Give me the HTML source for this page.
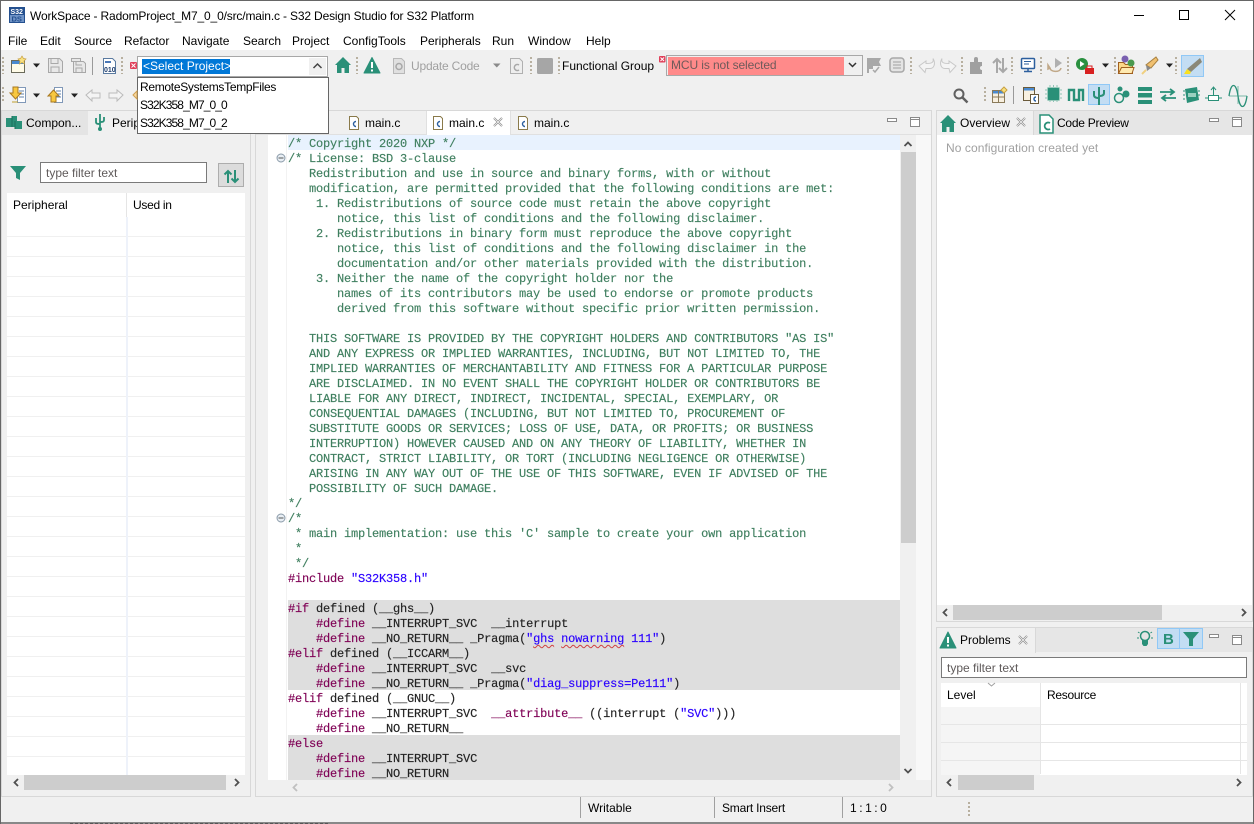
<!DOCTYPE html>
<html><head><meta charset="utf-8"><title>S32 Design Studio</title>
<style>
html,body{margin:0;padding:0;width:1254px;height:824px;overflow:hidden;background:#f0f0f0}
body{position:relative;font:12px/16px "Liberation Sans",sans-serif;color:#000}
.a{position:absolute;box-sizing:border-box}
.t{position:absolute;white-space:pre;line-height:16px;color:#000}
#code{position:absolute;left:288px;top:137px;margin:0;font:12px/15px "Liberation Mono",monospace;letter-spacing:-.2px;color:#3f7f5f;white-space:pre;-webkit-text-stroke:.15px}
#code i{font-style:normal;color:#7f0055}
#code b{font-weight:normal;color:#2a00ff}
#code u{font-style:normal;text-decoration:none;color:#222}
#code s{text-decoration:underline wavy #d04040 1px;text-underline-offset:2px;color:#2a00ff}
svg{position:absolute;left:0;top:0}
</style></head><body>
<div class="a" style="left:0;top:0;width:1254px;height:50px;background:#fff"></div>
<div class="t" style="left:30px;top:8px;letter-spacing:-.16px">WorkSpace - RadomProject_M7_0_0/src/main.c - S32 Design Studio for S32 Platform</div>
<div class="t" style="left:8px;top:33px">File</div>
<div class="t" style="left:40px;top:33px">Edit</div>
<div class="t" style="left:74px;top:33px">Source</div>
<div class="t" style="left:124px;top:33px">Refactor</div>
<div class="t" style="left:182px;top:33px">Navigate</div>
<div class="t" style="left:243px;top:33px">Search</div>
<div class="t" style="left:292px;top:33px">Project</div>
<div class="t" style="left:343px;top:33px">ConfigTools</div>
<div class="t" style="left:420px;top:33px">Peripherals</div>
<div class="t" style="left:492px;top:33px">Run</div>
<div class="t" style="left:528px;top:33px">Window</div>
<div class="t" style="left:586px;top:33px">Help</div>

<!-- left panel -->
<div class="a" style="left:1px;top:110px;width:250px;height:687px;background:#f0f0f0;border:1px solid #d8d8d8"></div>
<div class="a" style="left:2px;top:111px;width:86px;height:24px;background:#e4e4e4"></div>
<div class="t" style="left:26px;top:115px">Compon...</div>
<div class="t" style="left:112px;top:115px">Peripherals</div>
<div class="a" style="left:40px;top:162px;width:167px;height:21px;background:#fff;border:1px solid #7a7a7a"></div>
<div class="t" style="left:46px;top:165px;color:#5f5a5a">type filter text</div>
<div class="a" style="left:218px;top:163px;width:26px;height:24px;background:#dcdcdc;border:1px solid #adadad"></div>
<div class="a" style="left:7px;top:193px;width:238px;height:582px;background:#fff"></div>
<div class="a" style="left:7px;top:217px;width:238px;height:558px;background:repeating-linear-gradient(#fff 0 19px,#f0f0f0 19px 20px)"></div>
<div class="a" style="left:126px;top:193px;width:1px;height:24px;background:#e5e5e5"></div>
<div class="a" style="left:126px;top:217px;width:2px;height:558px;background:#eef2fa"></div>
<div class="t" style="left:13px;top:197px">Peripheral</div>
<div class="t" style="left:133px;top:197px;letter-spacing:-.3px">Used in</div>
<div class="a" style="left:24px;top:775px;width:202px;height:15px;background:#cdcdcd"></div>

<!-- editor -->
<div class="a" style="left:255px;top:110px;width:677px;height:687px;background:#f0f0f0;border:1px solid #d8d8d8"></div>
<div class="a" style="left:256px;top:111px;width:675px;height:23px;background:#f0f0f0"></div>
<div class="a" style="left:256px;top:134px;width:675px;height:1px;background:#e0e0e0"></div>
<div class="a" style="left:426px;top:111px;width:85px;height:24px;background:#fff;border-left:1px solid #e0e0e0;border-right:1px solid #e0e0e0"></div>
<div class="t" style="left:365px;top:115px">main.c</div>
<div class="t" style="left:449px;top:115px">main.c</div>
<div class="t" style="left:534px;top:115px">main.c</div>
<div class="a" style="left:268px;top:135px;width:632px;height:645px;background:#fff"></div>
<div class="a" style="left:286px;top:135px;width:1px;height:645px;background:#f2f2f2"></div>
<div class="a" style="left:288px;top:135px;width:612px;height:15px;background:#e8f2fe"></div>
<div class="a" style="left:288px;top:600px;width:612px;height:90px;background:#dedede"></div>
<div class="a" style="left:288px;top:735px;width:612px;height:45px;background:#dedede"></div>
<div class="a" style="left:900px;top:135px;width:16px;height:645px;background:#f0f0f0"></div>
<div class="a" style="left:916px;top:135px;width:15px;height:661px;background:#f8f8f8"></div>
<div class="a" style="left:901px;top:152px;width:15px;height:391px;background:#cdcdcd"></div>
<pre id="code">/* Copyright 2020 NXP */
/* License: BSD 3-clause
   Redistribution and use in source and binary forms, with or without
   modification, are permitted provided that the following conditions are met:
    1. Redistributions of source code must retain the above copyright
       notice, this list of conditions and the following disclaimer.
    2. Redistributions in binary form must reproduce the above copyright
       notice, this list of conditions and the following disclaimer in the
       documentation and/or other materials provided with the distribution.
    3. Neither the name of the copyright holder nor the
       names of its contributors may be used to endorse or promote products
       derived from this software without specific prior written permission.

   THIS SOFTWARE IS PROVIDED BY THE COPYRIGHT HOLDERS AND CONTRIBUTORS "AS IS"
   AND ANY EXPRESS OR IMPLIED WARRANTIES, INCLUDING, BUT NOT LIMITED TO, THE
   IMPLIED WARRANTIES OF MERCHANTABILITY AND FITNESS FOR A PARTICULAR PURPOSE
   ARE DISCLAIMED. IN NO EVENT SHALL THE COPYRIGHT HOLDER OR CONTRIBUTORS BE
   LIABLE FOR ANY DIRECT, INDIRECT, INCIDENTAL, SPECIAL, EXEMPLARY, OR
   CONSEQUENTIAL DAMAGES (INCLUDING, BUT NOT LIMITED TO, PROCUREMENT OF
   SUBSTITUTE GOODS OR SERVICES; LOSS OF USE, DATA, OR PROFITS; OR BUSINESS
   INTERRUPTION) HOWEVER CAUSED AND ON ANY THEORY OF LIABILITY, WHETHER IN
   CONTRACT, STRICT LIABILITY, OR TORT (INCLUDING NEGLIGENCE OR OTHERWISE)
   ARISING IN ANY WAY OUT OF THE USE OF THIS SOFTWARE, EVEN IF ADVISED OF THE
   POSSIBILITY OF SUCH DAMAGE.
*/
/*
 * main implementation: use this 'C' sample to create your own application
 *
 */
<i>#include</i> <b>"S32K358.h"</b>

<i>#if</i> <u>defined (__ghs__)</u>
    <i>#define</i> <u>__INTERRUPT_SVC  __interrupt</u>
    <i>#define</i> <u>__NO_RETURN__ _Pragma(</u><b>"<s>ghs</s> <s>nowarning</s> 111"</b><u>)</u>
<i>#elif</i> <u>defined (__ICCARM__)</u>
    <i>#define</i> <u>__INTERRUPT_SVC  __svc</u>
    <i>#define</i> <u>__NO_RETURN__ _Pragma(</u><b>"diag_suppress=Pe111"</b><u>)</u>
<i>#elif</i> <u>defined (__GNUC__)</u>
    <i>#define</i> <u>__INTERRUPT_SVC  </u><i>__attribute__</i> <u>((interrupt (</u><b>"SVC"</b><u>)))</u>
    <i>#define</i> <u>__NO_RETURN__</u>
<i>#else</i>
    <i>#define</i> <u>__INTERRUPT_SVC</u>
    <i>#define</i> <u>__NO_RETURN</u></pre>
<div class="a" style="left:256px;top:780px;width:675px;height:16px;background:#f0f0f0"></div>

<!-- right top panel -->
<div class="a" style="left:936px;top:110px;width:317px;height:512px;background:#fff;border:1px solid #d8d8d8"></div>
<div class="a" style="left:937px;top:111px;width:315px;height:24px;background:#e6e6e6"></div>
<div class="a" style="left:937px;top:111px;width:97px;height:24px;background:#f0f0f0;border-right:1px solid #d8d8d8"></div>
<div class="t" style="left:960px;top:115px">Overview</div>
<div class="t" style="left:1057px;top:115px;letter-spacing:-.25px">Code Preview</div>
<div class="t" style="left:946px;top:140px;color:#a0a0a0;letter-spacing:.08px">No configuration created yet</div>
<div class="a" style="left:937px;top:605px;width:315px;height:16px;background:#f0f0f0"></div>
<div class="a" style="left:953px;top:605px;width:209px;height:15px;background:#cdcdcd"></div>

<!-- problems panel -->
<div class="a" style="left:936px;top:627px;width:317px;height:170px;background:#f0f0f0;border:1px solid #d8d8d8"></div>
<div class="a" style="left:937px;top:628px;width:315px;height:24px;background:#e6e6e6"></div>
<div class="a" style="left:937px;top:628px;width:99px;height:25px;background:#f0f0f0;border-right:1px solid #d8d8d8"></div>
<div class="t" style="left:960px;top:632px">Problems</div>
<div class="a" style="left:1157px;top:628px;width:46px;height:21px;background:#c3ddf3;border:1px solid #90c8f6"></div>
<div class="a" style="left:1179px;top:628px;width:1px;height:21px;background:#90c8f6"></div>
<div class="a" style="left:941px;top:657px;width:306px;height:21px;background:#fff;border:1px solid #7a7a7a"></div>
<div class="t" style="left:947px;top:660px;color:#5f5a5a">type filter text</div>
<div class="a" style="left:941px;top:683px;width:306px;height:92px;background:#fff"></div>
<div class="a" style="left:941px;top:707px;width:99px;height:68px;background:#f5f5f5"></div>
<div class="a" style="left:941px;top:707px;width:306px;height:67px;background:repeating-linear-gradient(transparent 0 17px,#e6e6e6 17px 18px)"></div>
<div class="a" style="left:1040px;top:683px;width:1px;height:91px;background:#e5e5e5"></div>
<div class="a" style="left:1240px;top:683px;width:1px;height:91px;background:#e5e5e5"></div>
<div class="t" style="left:947px;top:687px">Level</div>
<div class="t" style="left:1047px;top:687px;letter-spacing:-.3px">Resource</div>
<div class="a" style="left:958px;top:775px;width:76px;height:15px;background:#cdcdcd"></div>

<!-- status bar -->
<div class="t" style="left:588px;top:800px">Writable</div>
<div class="t" style="left:722px;top:800px;letter-spacing:-.2px">Smart Insert</div>
<div class="t" style="left:850px;top:800px;letter-spacing:-.4px">1 : 1 : 0</div>
<div class="a" style="left:580px;top:797px;width:1px;height:21px;background:#a0a0a0"></div>
<div class="a" style="left:714px;top:797px;width:1px;height:21px;background:#a0a0a0"></div>
<div class="a" style="left:842px;top:797px;width:1px;height:21px;background:#a0a0a0"></div>

<!-- toolbar widgets -->
<div class="a" style="left:137px;top:56px;width:191px;height:21px;background:#fff;border:1px solid #a8a8a8"></div>
<div class="a" style="left:142px;top:59px;width:88px;height:15px;background:#0078d7"></div>
<div class="t" style="left:143px;top:58px;color:#fff">&lt;Select Project&gt;</div>
<div class="a" style="left:309px;top:58px;width:17px;height:17px;background:#f0f0f0"></div>
<div class="a" style="left:137px;top:77px;width:192px;height:57px;background:#fff;border:1px solid #666"></div>
<div class="t" style="left:140px;top:79px;letter-spacing:-.3px">RemoteSystemsTempFiles</div>
<div class="t" style="left:140px;top:97px;letter-spacing:-.9px">S32K358_M7_0_0</div>
<div class="t" style="left:140px;top:115px;letter-spacing:-.9px">S32K358_M7_0_2</div>
<div class="t" style="left:411px;top:58px;color:#a0a0a0;letter-spacing:-.2px">Update Code</div>
<div class="t" style="left:562px;top:58px">Functional Group</div>
<div class="a" style="left:666px;top:55px;width:197px;height:21px;background:#f0f0f0;border:1px solid #a8a8a8"></div>
<div class="a" style="left:668px;top:57px;width:176px;height:18px;background:#ff8a8a"></div>
<div class="t" style="left:671px;top:57px;color:#6e5a5a;letter-spacing:-.1px">MCU is not selected</div>
<div class="a" style="left:1181px;top:55px;width:23px;height:22px;background:#c3ddf3;border:1px solid #90c8f6"></div>
<div class="a" style="left:1088px;top:84px;width:22px;height:21px;background:#c3ddf3;border:1px solid #90c8f6"></div>

<svg width="1254" height="824" viewBox="0 0 1254 824" fill="none">
<!-- window frame -->
<path d="M.5 824V.5H1253.5V824" stroke="#666"/>
<path d="M0 823H1254" stroke="#666" stroke-width="1.5"/>
<path d="M70 823.5H330" stroke="#555" stroke-dasharray="3 2"/>
<!-- title icon -->
<rect x="9" y="7" width="16" height="16" fill="#24508f"/>
<rect x="10" y="15" width="14" height="7" fill="#6f93c6"/>
<text x="10.500" y="14" font-family="Liberation Sans" font-size="7" font-weight="bold" fill="#fff">S32</text>
<text x="11.500" y="21.500" font-family="Liberation Sans" font-size="7.500" font-weight="bold" fill="#24508f">DS</text>
<!-- window buttons -->
<path d="M1134 15.5H1144" stroke="#000"/>
<rect x="1179.5" y="10.5" width="9" height="9" stroke="#000"/>
<path d="M1225 10L1235 20M1235 10L1225 20" stroke="#000"/>
<!-- grips -->
<path d="M3 57V74M122 57V74M357 57V74M531 57V74M559 57V74M911 57V74M962 57V74M1012 57V74M1041 57V74M1068 57V74M1115 57V74M1176 57V74M3 87V103M985 87V103M969 802V818" stroke="#b8b0a0" stroke-width="2" stroke-dasharray="2 2"/>
<path d="M92.5 57V75M1013.5 86V104" stroke="#9a9a9a"/>
<!-- new wizard -->
<rect x="11.5" y="60.5" width="13" height="12" fill="#fffbe8" stroke="#6a6a5a"/><rect x="12" y="61" width="12" height="3" fill="#4a8ad0"/>
<path d="M22 56l1.5 2.5 2.5 .5-2 2 .5 3-2.500-1.500-2.500 1.500 .5-3-2-2 2.500-.5z" fill="#f8e080" stroke="#c8a040" stroke-width=".7"/>
<path d="M33 63.500h7l-3.500 4zM71 93.500h7l-3.500 4zM33 93.500h7l-3.500 4zM1102 63.500h7l-3.500 4zM1166 63.500h7l-3.500 4z" fill="#222"/>
<!-- save -->
<path d="M48.500 58.500h11l3 3v11h-14z" fill="#e8e8e8" stroke="#a8a8a8"/><path d="M51 59v4.500h7V59M51 72v-5h8v5" stroke="#a8a8a8"/>
<path d="M71.500 58.500h9v3h-9zM73.500 61.500h10l2 2v9h-12z" fill="#e8e8e8" stroke="#a8a8a8"/><path d="M76 62v3h6M76 72v-4h6v4" stroke="#a8a8a8"/>
<!-- 010 -->
<path d="M103.500 58.500h9l3 3v12h-12z" fill="#fff" stroke="#5a7aa0"/><rect x="105" y="61" width="6" height="2" fill="#4a78b8"/><text x="104" y="72" font-family="Liberation Sans" font-size="7" font-weight="bold" fill="#204070">010</text>
<!-- red error marks -->
<rect x="130" y="62" width="7" height="7" rx="1" fill="#e0405a"/><path d="M131.500 63.500l4 4m0-4l-4 4" stroke="#fff"/>
<rect x="659" y="56" width="6.500" height="6.500" rx="1" fill="#e0405a"/><path d="M660.500 57.500l3.500 3.500m0-3.500l-3.500 3.500" stroke="#fff"/>
<!-- combo chevrons -->
<path d="M313.500 68l4-4 4 4" stroke="#444" stroke-width="1.500"/>
<path d="M849 63l3.500 3.500 3.500-3.500" stroke="#333" stroke-width="1.500"/>
<!-- home and warning -->
<path d="M343 57l-8 8h2v8h4.500v-5h3v5H349v-8h2z" fill="#2a9078"/>
<path d="M372 57.500l-8 15.500h16z" fill="#2a9078" stroke="#2a9078" stroke-linejoin="round"/><path d="M372 62v6M372 69.500v2" stroke="#fff" stroke-width="2"/>
<!-- update code icon -->
<path d="M393.500 58.500h8l3 3v12h-11z" fill="#e0e0e0" stroke="#b8b8b8"/><circle cx="399" cy="66.500" r="3" stroke="#a8a8a8" stroke-width="1.500"/>
<path d="M493 63.500h7.500l-3.700 4z" fill="#8a8a8a"/>
<path d="M510.500 58.500h9l3 3v12h-12z" fill="#eee" stroke="#b0b0b0"/><path d="M519 65a3 3 0 1 0 0 5" stroke="#a8a8a8" stroke-width="1.500"/>
<rect x="537" y="58" width="16" height="16" rx="1.500" fill="#a6a6a6"/>
<!-- flag, comment, arrows -->
<path d="M867 58h14l-2 4 2 4h-8v3h-4v4h-2z" fill="#a8a8a8"/><path d="M873 70l2 2 4-5" stroke="#a8a8a8" stroke-width="1.500"/>
<rect x="890" y="58" width="14" height="14" rx="3" fill="#e4e4e4" stroke="#a8a8a8" stroke-width="1.500"/><path d="M893 62h8M893 65h8M893 68h8" stroke="#a0a0a0"/>
<path d="M919 66l7-5v2.500c6 0 8 -1 7-5 3 5 1 10-3 10h-4l-1 4z" fill="#f4f4f4" stroke="#c8c8c8"/>
<path d="M956 66l-7-5v2.500c-6 0-8 -1-7-5-3 5-1 10 3 10h4l1 4z" fill="#f4f4f4" stroke="#c8c8c8"/>
<path d="M970 62h4v-3a2 2 0 0 1 4 0v3h4v4a2 2 0 0 0 0 4v4h-12z" fill="#a0a0a0"/>
<path d="M997 73V59m-4 4l4-4 4 4M1003 58v14m-4-4l4 4 4-4" stroke="#a8a8a8" stroke-width="2"/>
<!-- monitor -->
<rect x="1021.500" y="58.500" width="13" height="10" rx="1" fill="#fff" stroke="#2c5f9e" stroke-width="1.500"/><path d="M1024 61.500h7M1024 64h5" stroke="#2c5f9e"/><path d="M1024 71.500h8M1028 69v2" stroke="#2c5f9e" stroke-width="1.500"/>
<!-- loop play -->
<path d="M1055 58l7 5-7 5z" fill="#b0b0b0"/><path d="M1050 68c0 4 10 5 11 0M1050 68l-2-3v4z" stroke="#c0a888" stroke-width="1.500"/>
<!-- run -->
<circle cx="1082" cy="64" r="6" fill="#2a9040"/><path d="M1080 61l4.500 3-4.500 3z" fill="#fff"/><rect x="1085" y="68" width="9" height="6" fill="#d82020"/><path d="M1087 68v-2h5v2" stroke="#d82020"/>
<!-- open folder -->
<path d="M1118.500 62.500h5l2 2h7v9h-14z" fill="#fcd88a" stroke="#a06020"/><path d="M1118.500 73.500l3-6h12.500l-2 6z" fill="#ffeab0" stroke="#a06020"/><circle cx="1125" cy="59" r="3.500" fill="#7a60b0"/><circle cx="1131" cy="63" r="3.500" fill="#4a9a50"/>
<!-- plug -->
<path d="M1156 57l2 3-7 8-5-3z" fill="#f0c070" stroke="#a88040"/><path d="M1146 65l5 3-4 3z" fill="#888"/><path d="M1142 74l4-4" stroke="#f0d080" stroke-width="2"/>
<!-- highlight -->
<path d="M1200 58l2 4-11 10-4-3z" fill="#8a8878"/><path d="M1184 74l3-5 4 3-1 2z" fill="#f8e020"/>
<!-- row 2 -->
<rect x="17.500" y="87.500" width="8" height="15" fill="#fff" stroke="#8098b8"/><path d="M19 91h5M19 94h5M19 97h5" stroke="#6080a8"/><path d="M13 87h5v6h3l-5.500 6-5.500-6h3z" fill="#f8c840" stroke="#a87820"/><path d="M12 102h6" stroke="#c0a030"/>
<rect x="54.500" y="87.500" width="8" height="15" fill="#fff" stroke="#8098b8"/><path d="M56 91h5M56 94h5M56 97h5" stroke="#6080a8"/><path d="M51 102h5v-6h3l-5.500-6-5.500 6h3z" fill="#f8c840" stroke="#a87820"/>
<path d="M86 95l6-5v3h8v5h-8v3z" fill="#f4f4f4" stroke="#bbb"/><path d="M123 95l-6-5v3h-8v5h8v3z" fill="#f4f4f4" stroke="#bbb"/>
<path d="M133 95l4-4v8z" fill="#f8d8a0" stroke="#d0a050"/>
<!-- search -->
<circle cx="959" cy="94" r="4.500" stroke="#606060" stroke-width="2"/><path d="M962.500 97.500l5 5" stroke="#606060" stroke-width="2.500"/>
<!-- table icons -->
<rect x="992.500" y="90.500" width="12" height="12" fill="#f8f0e0" stroke="#8a7a5a"/><rect x="993" y="91" width="11" height="2.500" fill="#4a8ad0"/><path d="M998.500 91v11M993 97h11" stroke="#8a7a5a"/><path d="M1004 87l3 3-3 3-3-3z" fill="#f8e080" stroke="#c8a040"/>
<rect x="1023.500" y="87.500" width="11" height="13" fill="#f8f0e0" stroke="#6a5a3a"/><rect x="1024" y="88" width="10" height="2.500" fill="#4a8ad0"/><rect x="1030.500" y="94.500" width="8" height="9" fill="#fff" stroke="#6a5a3a"/><path d="M1036 97a2 2 0 1 0 0 4" stroke="#2c5f9e" stroke-width="1.500"/>
<!-- teal nav icons -->
<rect x="1047.500" y="87.500" width="12" height="13" rx="1" fill="#2a9078" stroke="#9ccabd"/><path d="M1050 85v18M1053.500 85v18M1057 85v18M1045 90h18M1045 94h18M1045 98h18" stroke="#8fc4b5" stroke-dasharray="2 13"/>
<path d="M1069 101V90H1074V100H1079V90H1083V101" stroke="#2a9078" stroke-width="2.400"/>
<path d="M1099 87v18M1094 91v4c0 2 2 3 5 3M1104 90v3c0 2-2 3-5 3" stroke="#2a9078" stroke-width="2"/>
<circle cx="1119" cy="98" r="4.500" stroke="#2a9078" stroke-width="1.500"/><circle cx="1126" cy="94" r="3.500" fill="#2a9078"/><circle cx="1120" cy="89" r="2.500" fill="#2a9078"/>
<rect x="1138" y="87" width="14" height="4" fill="#2a9078"/><rect x="1138" y="93" width="14" height="4.500" fill="#2a9078"/><rect x="1138" y="100" width="14" height="4" fill="#2a9078"/>
<path d="M1160 92h14m-4-3l4 3-4 3M1176 98h-14m4-3l-4 3 4 3" stroke="#2a9078" stroke-width="1.800"/>
<path d="M1185 89l12-2 2 13-12 3z" fill="#2a9078"/><path d="M1183 91l2 0M1183 95h2M1183 99h2M1198 91h2M1198 95h2" stroke="#2a9078"/><rect x="1188" y="93" width="8" height="4" fill="#9ad0c0"/>
<rect x="1208.500" y="95.500" width="10" height="5" fill="#fff" stroke="#2a9078"/><path d="M1205 98h3M1219 98h3M1213.500 95v-7M1211 90l2.500-3 2.500 3" stroke="#2a9078"/>
<path d="M1229 96h18M1238 86v18" stroke="#7ab8a8"/><path d="M1229 96C1231 82 1236 82 1238 96S1245 110 1247 96" stroke="#2a9078" stroke-width="1.300"/>
<!-- tab icons -->
<path d="M6 118h6v-2h5v5h5v8h-7v-2h-9z" fill="#2a9078"/><path d="M12 116v11M15 121v8" stroke="#1c6e5b"/>
<path d="M100 114v16M96 118v4c0 2 2 2 4 2M104 117v3c0 2-2 2-4 2" stroke="#2a9078" stroke-width="1.800"/><circle cx="100" cy="129" r="2" fill="#2a9078"/>
<path d="M349.500 116.500h7l2 2v11h-9z" fill="#fff" stroke="#8a7a4a"/><path d="M356 121.500a2.500 2.500 0 1 0 0 5" stroke="#2c5f9e" stroke-width="1.400"/>
<path d="M433.500 116.500h7l2 2v11h-9z" fill="#fff" stroke="#8a7a4a"/><path d="M440 121.500a2.500 2.500 0 1 0 0 5" stroke="#2c5f9e" stroke-width="1.400"/>
<path d="M518.500 116.500h7l2 2v11h-9z" fill="#fff" stroke="#8a7a4a"/><path d="M525 121.500a2.500 2.500 0 1 0 0 5" stroke="#2c5f9e" stroke-width="1.400"/>
<path d="M494 118l8 8m0-8l-8 8M1017 118l8 8m0-8l-8 8M1019 636l8 8m0-8l-8 8" stroke="#8a8a8a" stroke-width="2"/><path d="M494 118l8 8m0-8l-8 8M1017 118l8 8m0-8l-8 8M1019 636l8 8m0-8l-8 8" stroke="#fff" stroke-width=".7"/>
<!-- min max -->
<g stroke="#8a8a8a" fill="#fff"><rect x="887.500" y="118.500" width="9" height="3"/><rect x="910.500" y="117.500" width="9" height="9"/><path d="M910.500 119.500h9"/><rect x="1209.500" y="118.500" width="9" height="3"/><rect x="1232.500" y="117.500" width="9" height="9"/><path d="M1232.500 119.500h9"/><rect x="1209.500" y="634.500" width="9" height="3"/><rect x="1232.500" y="635.500" width="9" height="9"/><path d="M1232.500 637.500h9"/></g>
<!-- overview / preview / problems icons -->
<path d="M948 115l-8 8h2v9h4.500v-5h3v5H954v-9h2z" fill="#2a9078"/>
<path d="M1040 115h9l4 4v14h-13z" fill="#fff" stroke="#2a9078" stroke-width="1.500"/><path d="M1050 123a3.500 3.500 0 1 0 0 6" stroke="#2a9078" stroke-width="1.800"/>
<path d="M948 632l-8 16h16z" fill="#2a9078" stroke="#2a9078" stroke-linejoin="round"/><path d="M948 637v6M948 644.500v2" stroke="#fff" stroke-width="2"/>
<!-- left filter and sort -->
<path d="M10 166h16l-6 7v7l-4 -2v-5z" fill="#2a9078"/>
<path d="M228 183v-12m-3.500 3.500l3.500-3.500 3.500 3.500M235 170v12m-3.500-3.500l3.500 3.500 3.500-3.500" stroke="#2a9078" stroke-width="2"/>
<!-- problems toolbar -->
<circle cx="1145" cy="636" r="4.500" stroke="#2a9078" stroke-width="1.500"/><path d="M1142 640h6v4l-1.500 2h-3l-1.500-2z" fill="#2a9078"/><path d="M1138 632l1.500 1M1152 632l-1.500 1M1137 638h2M1151 638h2" stroke="#2a9078"/>
<text x="1163" y="644" font-family="Liberation Sans" font-size="15" font-weight="bold" fill="#2a9078">B</text>
<path d="M1183 632h16l-6 7v7h-4v-7z" fill="#2a9078"/>
<!-- fold icons -->
<circle cx="281" cy="158" r="4" fill="#e8eef4" stroke="#8a9aa8"/><path d="M278.500 158h5" stroke="#555"/>
<circle cx="281" cy="518" r="4" fill="#e8eef4" stroke="#8a9aa8"/><path d="M278.500 518h5" stroke="#555"/>
<!-- scroll arrows -->
<g stroke="#505050" stroke-width="1.800"><path d="M904.500 146l3.500-3.500 3.500 3.500M904.500 769l3.500 3.500 3.500-3.500M947 609l-3.500 3.500 3.500 3.500M1242 609l3.500 3.500-3.500 3.500M951 779l-3.500 3.500 3.500 3.500M1237 779l3.500 3.500-3.500 3.500M18 779l-3.500 3.500 3.500 3.500M235 779l3.500 3.500-3.500 3.500"/></g>
<path d="M297 784l-3.500 3.500 3.500 3.500M889 784l3.500 3.500-3.500 3.500" stroke="#c0c0c0" stroke-width="1.800"/>
<path d="M988 683l3.500 3 3.500-3" stroke="#a0a0a0"/>
</svg>
</body></html>
